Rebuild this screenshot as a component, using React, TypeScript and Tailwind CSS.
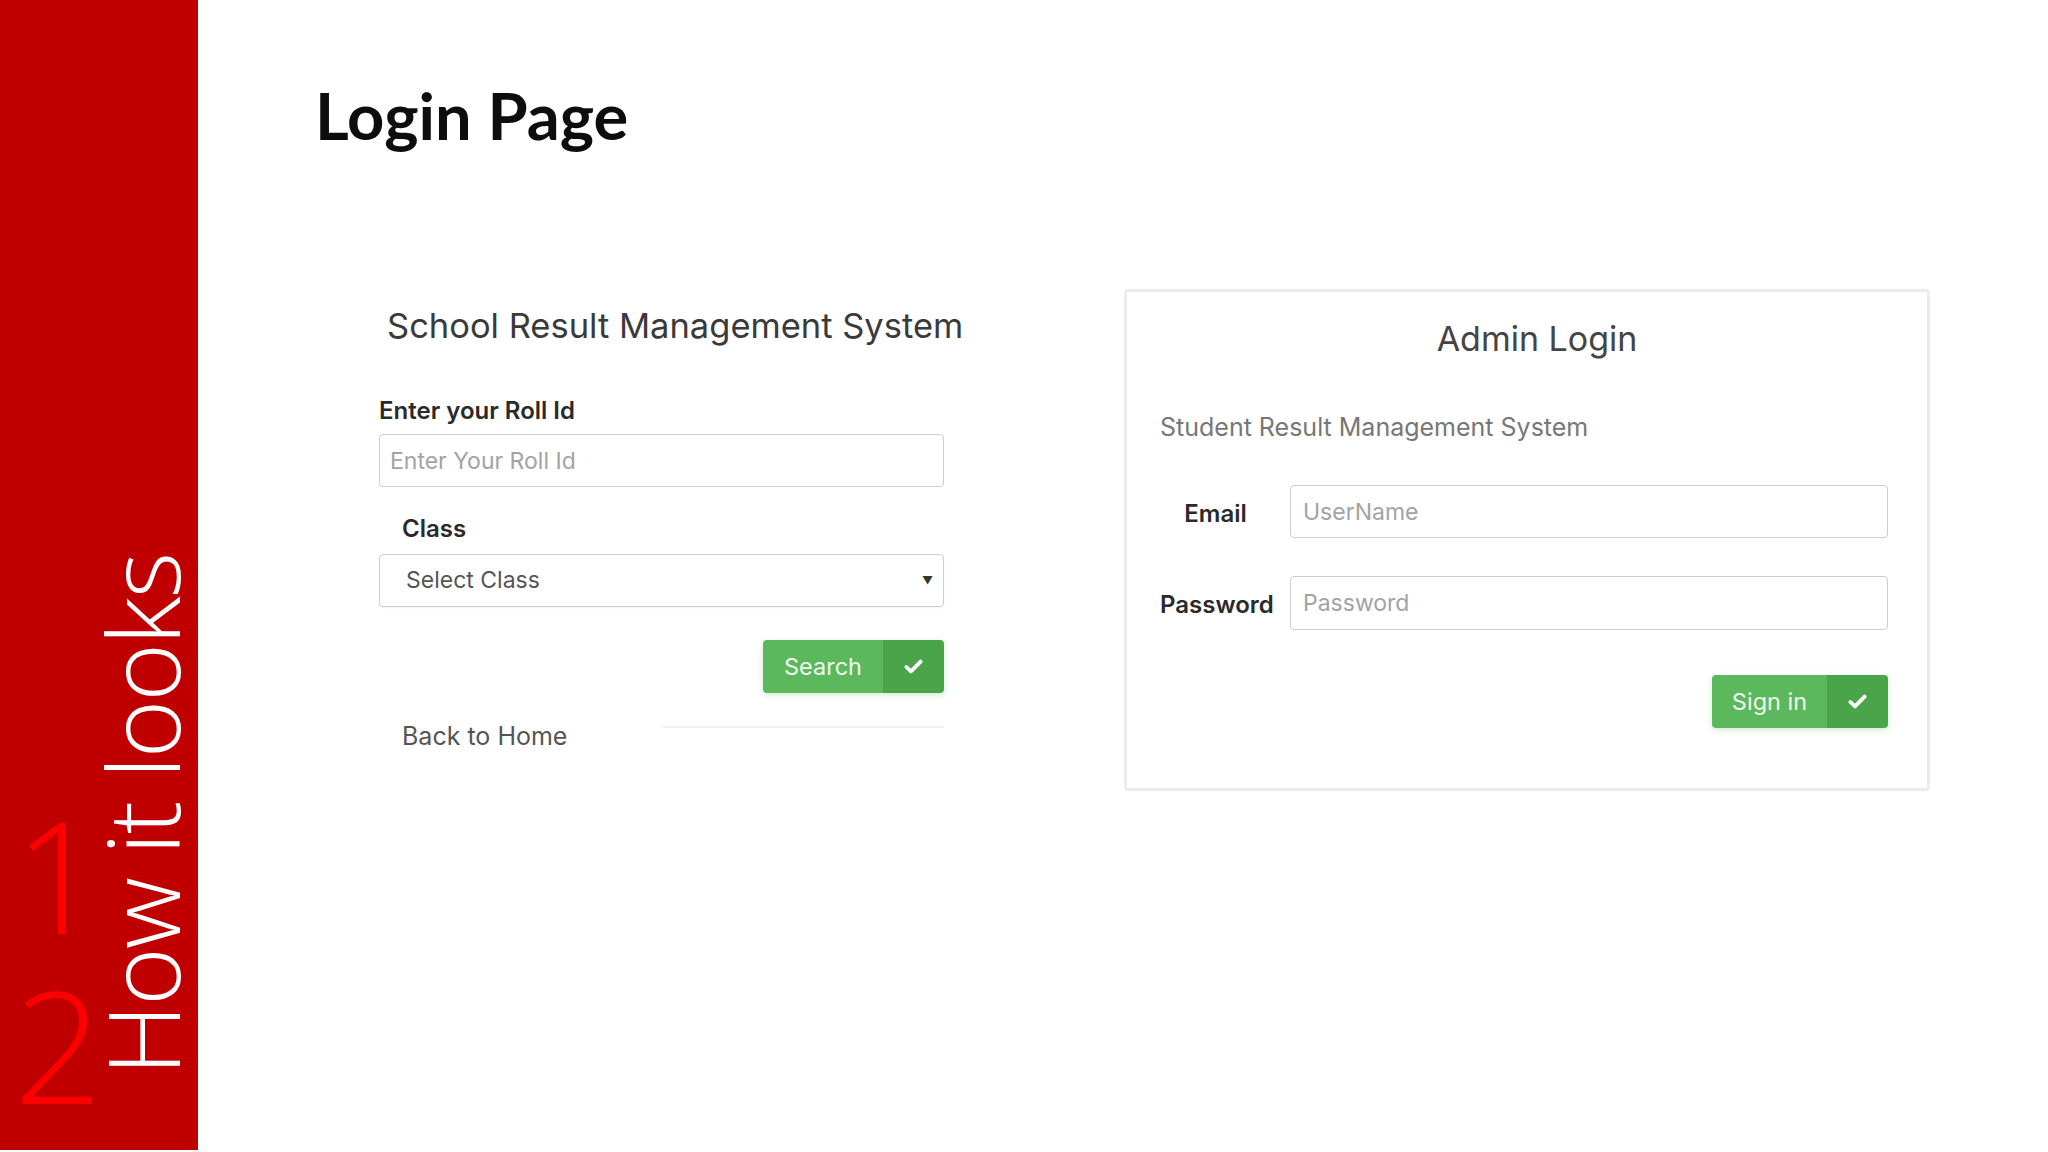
function CheckMark() {
  return (
    <svg width="19" height="15" viewBox="0 0 19 15">
      <path
        d="M2.4 8 L7 12.4 L16.6 2.6"
        fill="none"
        stroke="white"
        strokeWidth="3.8"
        strokeLinecap="round"
        strokeLinejoin="round"
      />
    </svg>
  );
}

function GreenButton({ label, textWidth }: { label: string; textWidth: string }) {
  return (
    <button className="flex h-[53px] overflow-hidden rounded-[4px] shadow-[0_2px_6px_rgba(76,174,76,0.25)]">
      <span
        className={`flex ${textWidth} items-center justify-center bg-[#5cb85c] text-[23.5px] text-[#f0faf0]`}
      >
        {label}
      </span>
      <span className="flex w-[61px] items-center justify-center bg-[#4aa54a]">
        <CheckMark />
      </span>
    </button>
  );
}

export default function App() {
  const form = "font-['Inter','Open_Sans',sans-serif]";

  return (
    <div className="flex h-[1152px] w-[2048px] overflow-hidden bg-white">
      {/* red side band */}
      <aside className="flex h-[1150px] w-[198px] shrink-0 items-end bg-[#c00000] pb-[21px] pl-[14px]">
        <div className="flex w-[77px] flex-col font-['Open_Sans',sans-serif] text-[155px] font-light leading-[170px] text-[#ff0000]">
          <span>1</span>
          <span>2</span>
        </div>
        <div className="mb-[53px] rotate-180 font-['Open_Sans',sans-serif] text-[100px] font-light leading-[100px] tracking-[-2px] text-white [writing-mode:vertical-rl]">
          How it looks
        </div>
      </aside>

      {/* slide body */}
      <main className="flex flex-1 flex-col pl-[117px] pt-[76px]">
        <h1 className="font-['Lato',sans-serif] text-[65px] font-bold leading-[78px] text-[#0d0d0d]">
          Login Page
        </h1>

        <div className={`ml-[64px] mt-[135px] flex items-start ${form}`}>
          {/* student search */}
          <div className="mt-[19px] flex w-[565px] flex-col">
            <h2 className="whitespace-nowrap pl-2 text-[34.5px] leading-[36px] text-[#3a3a3a]">
              School Result Management System
            </h2>
            <label className="mt-[55px] text-[24px] font-semibold leading-[24px] text-[#2a2a2a]">
              Enter your Roll Id
            </label>
            <input
              placeholder="Enter Your Roll Id"
              className="mt-[11px] h-[53px] rounded-[4px] border border-[#cdcdcd] px-[10px] text-[23px] text-[#555] outline-none placeholder:text-[#a3a3a3]"
            />
            <label className="ml-[23px] mt-[30px] text-[24px] font-semibold leading-[24px] text-[#2a2a2a]">
              Class
            </label>
            <div className="mt-[13px] flex h-[53px] items-center justify-between rounded-[4px] border border-[#cdcdcd] pl-[26px] pr-[10px] shadow-[0_1px_2px_rgba(0,0,0,0.06)]">
              <span className="text-[23px] text-[#555]">Select Class</span>
              <span className="text-[11px] text-[#333]">▼</span>
            </div>
            <div className="mt-[33px] flex justify-end">
              <GreenButton label="Search" textWidth="w-[120px]" />
            </div>
            <div className="mt-[31px] flex items-start">
              <span className="pl-[23px] text-[25px] leading-[24px] text-[#555]">Back to Home</span>
              <div className="ml-auto mt-[2px] h-[2px] w-[281px] bg-[#f0f0f0]" />
            </div>
          </div>

          {/* admin login card */}
          <div className="ml-[180px] flex w-[806px] flex-col rounded-[4px] border-[3px] border-[#ececec] pb-[60px] pl-[33px] pr-[39px] pt-[29px]">
            <h2 className="pl-[26px] text-center text-[34px] leading-[36px] text-[#444]">Admin Login</h2>
            <p className="mt-[58px] text-[25px] leading-[24px] text-[#777]">
              Student Result Management System
            </p>
            <div className="mt-[46px] flex items-center gap-[19px]">
              <label className="w-[111px] pt-[4px] text-center text-[24px] font-semibold text-[#2a2a2a]">
                Email
              </label>
              <input
                placeholder="UserName"
                className="h-[53px] flex-1 rounded-[4px] border border-[#cdcdcd] px-[12px] text-[23px] outline-none placeholder:text-[#a3a3a3]"
              />
            </div>
            <div className="mt-[38px] flex items-center gap-[19px]">
              <label className="w-[111px] pt-[4px] text-center text-[24px] font-semibold text-[#2a2a2a]">
                Password
              </label>
              <input
                placeholder="Password"
                className="h-[54px] flex-1 rounded-[4px] border border-[#cdcdcd] px-[12px] text-[23px] outline-none placeholder:text-[#a3a3a3]"
              />
            </div>
            <div className="mt-[45px] flex justify-end">
              <GreenButton label="Sign in" textWidth="w-[115px]" />
            </div>
          </div>
        </div>
      </main>
    </div>
  );
}
